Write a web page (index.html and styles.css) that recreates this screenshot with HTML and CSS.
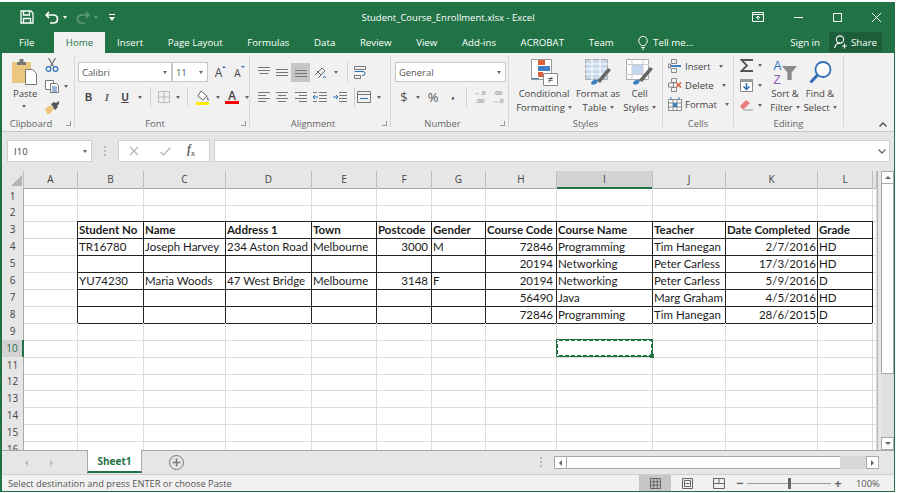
FILE: index.html
```html
<!DOCTYPE html>
<html lang="en">
<head>
<meta charset="utf-8">
<title>Student_Course_Enrollment.xlsx - Excel</title>
<link rel="stylesheet" href="styles.css">
</head>
<body>
<div class="window">
  <header class="titlebar">
    <div class="qat">
      <svg class="q-save" width="14" height="14" viewBox="0 0 14 14" fill="none" stroke="#fff" stroke-width="1.3"><path d="M1 1h10l2 2v10H1z"/><path d="M3.5 1v4h6V1M3.5 13V8.5h7V13"/></svg>
      <svg class="q-undo" width="14" height="13" viewBox="0 0 14 13" fill="none" stroke="#fff" stroke-width="1.7"><path d="M4 1 1.2 4 4 7M1.5 4H8c6 0 6 8 0 8H5"/></svg>
      <i class="caret white q-c1"></i>
      <svg class="q-redo" width="14" height="13" viewBox="0 0 14 13" fill="none" stroke="#5c9a78" stroke-width="1.7"><path d="M10 1l2.8 3L10 7M12.5 4H6c-6 0-6 8 0 8h3"/></svg>
      <i class="caret dim q-c2"></i>
      <svg class="q-more" width="6" height="7" viewBox="0 0 6 7" fill="#fff"><path d="M0 0h6v1H0zM0 3h6L3 7z"/></svg>
    </div>
    <div class="doc-title">Student_Course_Enrollment.xlsx - Excel</div>
    <div class="controls">
      <svg width="12" height="10" viewBox="0 0 12 10" fill="none" stroke="#fff"><path d="M.5.500h11v9H.5zM.5 2.500h11M6 8V4M4 6l2-2 2 2"/></svg>
      <svg width="9" height="9" viewBox="0 0 9 9" stroke="#fff"><path d="M0 4.500h9"/></svg>
      <svg width="9" height="9" viewBox="0 0 9 9" fill="none" stroke="#fff"><path d="M.5.500h8v8h-8z"/></svg>
      <svg width="9" height="9" viewBox="0 0 9 9" stroke="#fff"><path d="M0 0l9 9M9 0L0 9"/></svg>
    </div>
  </header>

  <nav class="tabs">
    <span class="tab tab-file">File</span>
    <span class="tab active">Home</span>
    <span class="tab">Insert</span>
    <span class="tab">Page Layout</span>
    <span class="tab">Formulas</span>
    <span class="tab">Data</span>
    <span class="tab">Review</span>
    <span class="tab">View</span>
    <span class="tab">Add-ins</span>
    <span class="tab">ACROBAT</span>
    <span class="tab">Team</span>
    <span class="tell">
      <svg width="10" height="14" viewBox="0 0 10 14" fill="none" stroke="#fff"><path d="M3 9.500C2.500 8 .7 7 .7 4.700a4.300 4.300 0 0 1 8.600 0C9.300 7 7.500 8 7 9.500zM3.300 11.500h3.400M4 13.200h2"/></svg>
      Tell me...
    </span>
    <span class="signin">Sign in</span>
    <span class="share">
      <svg width="14" height="14" viewBox="0 0 14 14" fill="none" stroke="#fff" stroke-width="1.100"><circle cx="6" cy="4.500" r="3.600"/><path d="M.7 13c.3-3 2.300-4.800 5.300-4.800M10.500 8.500v5M8 11h5"/></svg>
      Share
    </span>
  </nav>

  <section class="ribbon">
    <div class="grp g-clip">
      <div class="body clip-body">
        <div class="paste">
          <svg width="25" height="26" viewBox="0 0 25 26"><rect x="0" y="3" width="19" height="21" fill="#ecc77f"/><path d="M5 3h9v3H5zM7.500 0h4v3h-4z" fill="#7a7a7a"/><path d="M13.500 10.500h7l4 4v11h-11z" fill="#fff" stroke="#777"/></svg>
          <span class="big-label">Paste</span>
          <i class="caret"></i>
        </div>
        <div class="clip-col">
          <svg width="14" height="14" viewBox="0 0 14 14" fill="none"><path d="M3.500 0l5 8.500M10.500 0l-5 8.500" stroke="#6b6b6b" stroke-width="1.200"/><circle cx="3.500" cy="11" r="2.300" stroke="#2f6fb5" stroke-width="1.200"/><circle cx="10.500" cy="11" r="2.300" stroke="#2f6fb5" stroke-width="1.200"/></svg>
          <div class="with-caret">
            <svg width="14" height="13" viewBox="0 0 14 13" fill="#fff" stroke="#777"><path d="M.5.500h8v9h-8z"/><path d="M5.500 3.500h6l2 2v7h-8z"/><path d="M7 7h5M7 9h5M7 11h5" stroke="#2f6fb5"/></svg>
            <i class="caret"></i>
          </div>
          <svg width="14" height="13" viewBox="0 0 14 13"><path d="M0 8l5-4 4 4-4 5H2z" fill="#ecc77f"/><path d="M6 3l3-2 2 1 3-2v3l-2 2 1 1-3 3z" fill="#555"/></svg>
        </div>
      </div>
      <div class="label">Clipboard<i class="launch"></i></div>
    </div>

    <div class="grp g-font">
      <div class="body stack">
        <div class="row">
          <div class="combo c-font">Calibri<i class="caret"></i></div>
          <div class="combo c-size">11<i class="caret"></i></div>
          <span class="tool w19 a-up">A<i class="blue-up"></i></span>
          <span class="tool w19 a-down">A<i class="blue-down"></i></span>
        </div>
        <div class="row r2">
          <span class="tool w19 fb">B</span>
          <span class="tool w18 fi">I</span>
          <span class="tool w18 fu">U</span>
          <span class="tool w12"><i class="caret"></i></span>
          <i class="sep"></i>
          <span class="tool w18 borders"><svg width="12" height="12" viewBox="0 0 12 12" fill="none" stroke="#888" stroke-dasharray="1 1"><path d="M.5.500h11v11H.5zM6 .500v11M.5 6h11"/></svg></span>
          <span class="tool w10"><i class="caret"></i></span>
          <i class="sep"></i>
          <span class="tool w22"><svg width="14" height="15" viewBox="0 0 14 15"><path d="M5 1l6 5-4 4-5-4z" fill="#fff" stroke="#666"/><path d="M11 6l2 4-1 1-1-2z" fill="#777"/><rect y="12" width="13" height="3" fill="#ffee00"/></svg></span>
          <span class="tool w7"><i class="caret"></i></span>
          <span class="tool w22 ca"><span class="ca-l">A</span><i class="red-bar"></i></span>
          <span class="tool w7"><i class="caret"></i></span>
        </div>
      </div>
      <div class="label">Font<i class="launch"></i></div>
    </div>

    <div class="grp g-align">
      <div class="body stack">
        <div class="row pad">
          <span class="tool w18"><svg class="al" viewBox="0 0 12 10"><path d="M0 .5h12M0 3.500h12M1.500 6.500h9"/></svg></span>
          <span class="tool w18"><svg class="al" viewBox="0 0 12 10"><path d="M0 2.500h12M0 5.500h12M0 8.500h12"/></svg></span>
          <span class="tool w19 on"><svg class="al" viewBox="0 0 12 10"><path d="M0 3.500h12M0 6.500h12M0 9.500h12"/></svg></span>
          <span class="tool w20"><svg width="13" height="12" viewBox="0 0 13 12" fill="none" stroke="#666"><path d="M1 9l7-7 3 3-7 7M3 5l4 4"/><path d="M9 11h3" stroke="#2f6fb5"/></svg></span>
          <span class="tool w12"><i class="caret"></i></span>
          <i class="sep s-tall"></i>
          <span class="tool w26"><svg width="14" height="13" viewBox="0 0 14 13" fill="none" stroke="#777"><path d="M.5.500h11v3H.5zM.5 9.500h6v3h-6z"/><path d="M.5 5.500h8.500a2 2 0 0 1 0 4H8" stroke="#2f6fb5"/></svg></span>
        </div>
        <div class="row pad r2">
          <span class="tool w18"><svg class="al" viewBox="0 0 12 10"><path d="M0 .5h12M0 3.500h8M0 6.500h12M0 9.500h8"/></svg></span>
          <span class="tool w18"><svg class="al" viewBox="0 0 12 10"><path d="M0 .5h12M2 3.500h8M0 6.500h12M2 9.500h8"/></svg></span>
          <span class="tool w19"><svg class="al" viewBox="0 0 12 10"><path d="M0 .5h12M4 3.500h8M0 6.500h12M4 9.500h8"/></svg></span>
          <span class="tool w20"><svg width="14" height="10" viewBox="0 0 14 10" fill="none" stroke="#777"><path d="M6 .5h8M6 3.500h8M6 6.500h8M6 9.500h8M0 .5h4M0 9.500h4"/><path d="M5 5H0M2 3 0 5l2 2" stroke="#2f6fb5"/></svg></span>
          <span class="tool w19"><svg width="14" height="10" viewBox="0 0 14 10" fill="none" stroke="#777"><path d="M6 .5h8M6 3.500h8M6 6.500h8M6 9.500h8"/><path d="M0 5h5M3 3l2 2-2 2" stroke="#2f6fb5"/></svg></span>
          <i class="sep s-short"></i>
          <span class="tool w18"><svg width="14" height="12" viewBox="0 0 14 12" fill="none" stroke="#777"><path d="M.5.500h13v11H.5zM.5 3.500h13"/><path d="M3 7.500h8" stroke="#2f6fb5"/></svg></span>
          <span class="tool w12"><i class="caret"></i></span>
        </div>
      </div>
      <div class="label">Alignment<i class="launch"></i></div>
    </div>

    <div class="grp g-num">
      <div class="body stack">
        <div class="row"><div class="combo c-num">General<i class="caret"></i></div></div>
        <div class="row r2 num-row">
          <span class="tool w18 sym">$</span>
          <span class="tool w9"><i class="caret"></i></span>
          <span class="tool w22 sym">%</span>
          <span class="tool w18 sym comma">,</span>
          <i class="sep"></i>
          <span class="tool w18 dec"><em>←.0</em><em>.00</em></span>
          <span class="tool w18 dec"><em>.00</em><em>→.0</em></span>
        </div>
      </div>
      <div class="label">Number<i class="launch"></i></div>
    </div>

    <div class="grp g-styles">
      <div class="body styles-body">
        <div class="big b-cond">
          <svg width="27" height="27" viewBox="0 0 27 27"><path d="M.5.500h20v20H.5z" fill="#fff" stroke="#999"/><path d="M7 1h7v5H7z" fill="#d9603b"/><path d="M7 7h12v5H7z" fill="#3f7fc1"/><path d="M7 13h5v5H7z" fill="#d9603b"/><path d="M1 19h7v1H1z" fill="#3f7fc1"/><path d="M12.500 14.500h14v12h-14z" fill="#fff" stroke="#888"/><text x="19.500" y="24" text-anchor="middle" class="ne">≠</text></svg>
          <span>Conditional</span><span>Formatting<i class="caret"></i></span>
        </div>
        <div class="big b-table">
          <svg width="27" height="27" viewBox="0 0 27 27"><path d="M.5.500h22v20H.5z" fill="#c9d9ec" stroke="#aaa"/><path d="M0 5h23M0 10h23M0 15h23M7 0v21M15 0v21" stroke="#fff"/><path d="M12 22l11-13 3 2-11 13z" fill="#666"/><path d="M6 25c0-3 3-5 7-4l-1 3c-2 2-4 2-6 1z" fill="#3f7fc1"/></svg>
          <span>Format as</span><span>Table<i class="caret"></i></span>
        </div>
        <div class="big b-cell">
          <svg width="27" height="27" viewBox="0 0 27 27"><path d="M.5.500h22v20H.5z" fill="#fff" stroke="#aaa"/><path d="M6 6h11v9H6z" fill="#c3d7ee"/><path d="M0 5.500h23M6 0v21M17 0v21M0 15.500h23" stroke="#ccc"/><path d="M13 21l11-13 3 2-11 13z" fill="#666"/><path d="M7 25c0-3 3-5 7-4l-1 3c-2 2-4 2-6 1z" fill="#3f7fc1"/></svg>
          <span>Cell</span><span>Styles<i class="caret"></i></span>
        </div>
      </div>
      <div class="label">Styles</div>
    </div>

    <div class="grp g-cells">
      <div class="body stack cells-body">
        <div class="cell-btn"><svg width="14" height="14" viewBox="0 0 14 14" fill="none" stroke="#888"><path d="M3.500.5h5v4h-5zM3.500 9.500h5v4h-5zM.5 5h2v4h-2z"/><path d="M3 7h10" stroke="#3f7fc1" stroke-width="2"/></svg><span>Insert</span><i class="caret"></i></div>
        <div class="cell-btn"><svg width="14" height="14" viewBox="0 0 14 14" fill="none" stroke="#888"><path d="M3.500.5h5v4h-5zM3.500 9.500h5v4h-5zM.5 5h5v4h-5z"/><path d="M8 4.500l5 5M13 4.500l-5 5" stroke="#d9603b" stroke-width="1.500"/></svg><span>Delete</span><i class="caret"></i></div>
        <div class="cell-btn"><svg width="14" height="14" viewBox="0 0 14 14" fill="#fff" stroke="#888"><path d="M.5 2.500h13v11H.5zM.5 6h13M.5 10h13M5 2.500v11M9 2.500v11"/><path d="M5 6h4v4H5z" fill="#3f7fc1" stroke="none"/><path d="M3 0v3M11 0v3" stroke="#3f7fc1"/></svg><span>Format</span><i class="caret"></i></div>
      </div>
      <div class="label">Cells</div>
    </div>

    <div class="grp g-edit">
      <div class="body edit-body">
        <div class="edit-col">
          <div class="with-caret"><svg width="13" height="13" viewBox="0 0 13 13" fill="none" stroke="#555" stroke-width="1.800"><path d="M13 1H1.500L7 6.500 1.500 12H13"/></svg><i class="caret"></i></div>
          <div class="with-caret"><svg width="13" height="13" viewBox="0 0 13 13"><path d="M.5.500h12v12H.5z" fill="#fff" stroke="#888"/><path d="M0 0h13v3H0z" fill="#999"/><path d="M6.500 4v6M3.500 7.500l3 3 3-3" fill="none" stroke="#2f6fb5" stroke-width="1.500"/></svg><i class="caret"></i></div>
          <div class="with-caret"><svg width="13" height="12" viewBox="0 0 13 12"><path d="M0 7l6-6 4 3-6 6H2z" fill="#e7817f"/><path d="M3 11h10" stroke="#999"/></svg><i class="caret"></i></div>
        </div>
        <div class="big b-sort">
          <span class="sort-icon"><span class="az"><b class="lt-a">A</b><b class="lt-z">Z</b></span><svg width="15" height="14" viewBox="0 0 14 13"><path d="M0 0h14L9 6v7H5V6z" fill="#8a8a8a"/></svg></span>
          <span>Sort &amp;</span><span>Filter<i class="caret"></i></span>
        </div>
        <div class="big b-find">
          <svg width="23" height="24" viewBox="0 0 23 24" fill="none"><circle cx="14" cy="9" r="7.500" fill="#fff" stroke="#2f6fb5" stroke-width="1.800"/><path d="M8.500 14.500 1.500 22" stroke="#2f6fb5" stroke-width="3"/></svg>
          <span>Find &amp;</span><span>Select<i class="caret"></i></span>
        </div>
      </div>
      <div class="label">Editing</div>
    </div>

    <div class="collapse"><svg width="8" height="5" viewBox="0 0 8 5" fill="none" stroke="#555" stroke-width="1.500"><path d="M.5 4.500 4 1l3.500 3.500"/></svg></div>
  </section>

  <section class="formula">
    <div class="namebox">I10<i class="caret"></i></div>
    <div class="dots"></div>
    <div class="fx-box">
      <svg width="10" height="10" viewBox="0 0 10 10" stroke="#b5b5b5" stroke-width="1.200"><path d="M1 1l8 8M9 1 1 9"/></svg>
      <svg width="11" height="9" viewBox="0 0 11 9" fill="none" stroke="#b5b5b5" stroke-width="1.200"><path d="M.5 5l3 3 7-7.500"/></svg>
      <span class="fx">f<sub>x</sub></span>
    </div>
    <div class="fx-input"><svg width="8" height="5" viewBox="0 0 8 5" fill="none" stroke="#666" stroke-width="1.300"><path d="M.5.500 4 4 7.500.5"/></svg></div>
  </section>

  <section class="sheet">
    <div class="grid">
      <div class="line head"><span class="corner"><svg width="11" height="11" viewBox="0 0 11 11"><path d="M11 0v11H0z" fill="#b4b4b4"/></svg></span><span>A</span><span>B</span><span>C</span><span>D</span><span>E</span><span>F</span><span>G</span><span>H</span><span class="sel">I</span><span>J</span><span>K</span><span>L</span><span></span></div>
      <div class="line"><b>1</b><s></s><s></s><s></s><s></s><s></s><s></s><s></s><s></s><s></s><s></s><s></s><s></s><s></s></div>
      <div class="line"><b>2</b><s></s><s class="kb"></s><s class="kb"></s><s class="kb"></s><s class="kb"></s><s class="kb"></s><s class="kb"></s><s class="kb"></s><s class="kb"></s><s class="kb"></s><s class="kb"></s><s class="kb"></s><s></s></div>
      <div class="line th"><b>3</b><s class="kr"></s><s class="k">Student No</s><s class="k">Name</s><s class="k">Address 1</s><s class="k">Town</s><s class="k">Postcode</s><s class="k">Gender</s><s class="k">Course Code</s><s class="k">Course Name</s><s class="k">Teacher</s><s class="k">Date Completed</s><s class="k">Grade</s><s></s></div>
      <div class="line"><b>4</b><s class="kr"></s><s class="k">TR16780</s><s class="k">Joseph Harvey</s><s class="k">234 Aston Road</s><s class="k">Melbourne</s><s class="k n">3000</s><s class="k">M</s><s class="k n">72846</s><s class="k">Programming</s><s class="k">Tim Hanegan</s><s class="k n d">2/7/2016</s><s class="k">HD</s><s></s></div>
      <div class="line"><b>5</b><s class="kr"></s><s class="k"></s><s class="k"></s><s class="k"></s><s class="k"></s><s class="k"></s><s class="k"></s><s class="k n">20194</s><s class="k">Networking</s><s class="k">Peter Carless</s><s class="k n d">17/3/2016</s><s class="k">HD</s><s></s></div>
      <div class="line"><b>6</b><s class="kr"></s><s class="k">YU74230</s><s class="k">Maria Woods</s><s class="k">47 West Bridge</s><s class="k">Melbourne</s><s class="k n">3148</s><s class="k">F</s><s class="k n">20194</s><s class="k">Networking</s><s class="k">Peter Carless</s><s class="k n d">5/9/2016</s><s class="k">D</s><s></s></div>
      <div class="line"><b>7</b><s class="kr"></s><s class="k"></s><s class="k"></s><s class="k"></s><s class="k"></s><s class="k"></s><s class="k"></s><s class="k n">56490</s><s class="k">Java</s><s class="k">Marg Graham</s><s class="k n d">4/5/2016</s><s class="k">HD</s><s></s></div>
      <div class="line"><b>8</b><s class="kr"></s><s class="k"></s><s class="k"></s><s class="k"></s><s class="k"></s><s class="k"></s><s class="k"></s><s class="k n">72846</s><s class="k">Programming</s><s class="k">Tim Hanegan</s><s class="k n d">28/6/2015</s><s class="k">D</s><s></s></div>
      <div class="line"><b>9</b><s></s><s></s><s></s><s></s><s></s><s></s><s></s><s></s><s></s><s></s><s></s><s></s><s></s></div>
      <div class="line"><b class="sel">10</b><s></s><s></s><s></s><s></s><s></s><s></s><s></s><s></s><s></s><s></s><s></s><s></s><s></s></div>
      <div class="line"><b>11</b><s></s><s></s><s></s><s></s><s></s><s></s><s></s><s></s><s></s><s></s><s></s><s></s><s></s></div>
      <div class="line"><b>12</b><s></s><s></s><s></s><s></s><s></s><s></s><s></s><s></s><s></s><s></s><s></s><s></s><s></s></div>
      <div class="line"><b>13</b><s></s><s></s><s></s><s></s><s></s><s></s><s></s><s></s><s></s><s></s><s></s><s></s><s></s></div>
      <div class="line"><b>14</b><s></s><s></s><s></s><s></s><s></s><s></s><s></s><s></s><s></s><s></s><s></s><s></s><s></s></div>
      <div class="line"><b>15</b><s></s><s></s><s></s><s></s><s></s><s></s><s></s><s></s><s></s><s></s><s></s><s></s><s></s></div>
      <div class="line"><b>16</b><s></s><s></s><s></s><s></s><s></s><s></s><s></s><s></s><s></s><s></s><s></s><s></s><s></s></div>
      <div class="ants"><i></i></div>
    </div>
    <div class="vscroll">
      <span class="sb-btn"><i class="tri up"></i></span>
      <span class="v-thumb"></span>
      <span class="v-rest"></span>
      <span class="sb-btn"><i class="tri down"></i></span>
    </div>
  </section>

  <section class="sheetbar">
    <div class="nav-arrows"><i class="tri left"></i><i class="tri right"></i></div>
    <div class="sheet-tab">Sheet1</div>
    <svg class="add" width="15" height="15" viewBox="0 0 15 15" fill="none" stroke="#777"><circle cx="7.500" cy="7.500" r="7"/><path d="M7.500 3.500v8M3.500 7.500h8" stroke-width="1.500"/></svg>
    <div class="hdots"></div>
    <div class="hscroll">
      <span class="sb-btn"><i class="tri left dark"></i></span>
      <span class="h-thumb"></span>
      <span class="h-rest"></span>
      <span class="sb-btn"><i class="tri right dark"></i></span>
    </div>
  </section>

  <footer class="status">
    <span class="msg">Select destination and press ENTER or choose Paste</span>
    <div class="views">
      <span class="view on"><svg width="11" height="11" viewBox="0 0 11 11" fill="none" stroke="#666"><path d="M.5.500h10v10H.5zM.5 3.800h10M.5 7.200h10M3.800.5v10M7.200.5v10"/></svg></span>
      <span class="view"><svg width="11" height="11" viewBox="0 0 11 11" fill="none" stroke="#666"><path d="M.5.500h10v10H.5zM2.500 2.500h6v6h-6zM3.500 5.500h4"/></svg></span>
      <span class="view"><svg width="12" height="11" viewBox="0 0 12 11" fill="none" stroke="#666"><path d="M.5.500h11v10H.5zM6 .5v5H.5M6 5.500h5.500"/></svg></span>
    </div>
    <div class="zoom">
      <span class="z-sym">−</span>
      <span class="z-track"><i></i></span>
      <span class="z-sym">+</span>
      <span class="z-val">100%</span>
    </div>
  </footer>
</div>
</body>
</html>
```
FILE: styles.css
```css
* { box-sizing: border-box; }
html, body { margin: 0; padding: 0; background: #fff; }
body { font-family: "Open Sans", "Noto Sans", sans-serif; color: #444; overflow: hidden; }
svg { display: block; flex: none; }
.window { width: 895px; height: 490px; margin-top: 2px; border-left: 2px solid #217346; border-right: 1px solid #217346; border-bottom: 1px solid #217346; background: #e6e6e6; overflow: hidden; }

/* title bar */
.titlebar { height: 30px; background: #217346; display: grid; grid-template-columns: 1fr auto 1fr; align-items: center; color: #fff; }
.qat { display: flex; align-items: center; padding-left: 18px; }
.q-undo { margin-left: 11px; }
.q-c1 { margin-left: 4px; }
.q-redo { margin-left: 9px; }
.q-c2 { margin-left: 4px; }
.q-more { margin-left: 11px; }
.doc-title { font-size: 9.500px; }
.controls { display: flex; align-items: center; justify-content: flex-end; gap: 30px; padding-right: 13px; }
.caret { display: inline-block; width: 0; height: 0; border-top: 3px solid #666; border-left: 2.500px solid transparent; border-right: 2.500px solid transparent; flex: none; }
.caret.white { border-top-color: #fff; }
.caret.dim { border-top-color: #5c9a78; }

/* tabs */
.tabs { height: 21px; background: #217346; display: flex; align-items: stretch; color: #fff; font-size: 9.700px; }
.tab { display: flex; align-items: center; padding: 0 12.300px; white-space: nowrap; }
.tab-file { padding: 0 20px 0 17px; }
.tab.active { background: #f1f1f1; color: #217346; padding: 0 11.500px; }
.tell { display: flex; align-items: center; gap: 5px; margin-left: 12px; }
.signin { display: flex; align-items: center; margin-left: auto; }
.share { display: flex; align-items: center; gap: 3px; width: 53px; height: 20px; margin: 0 12px 0 9px; padding-left: 5px; background: #1b5e39; }

/* ribbon */
.ribbon { height: 79px; background: #f1f1f1; border-bottom: 1px solid #c6c6c6; display: flex; position: relative; font-size: 9.500px; }
.grp { display: flex; flex-direction: column; border-right: 1px solid #d8d8d8; margin: 3px 0 4px; }
.body { flex: 1; min-height: 0; }
.label { height: 12px; position: relative; text-align: center; line-height: 18px; color: #666; font-size: 9.400px; }
.label:has(.launch) { padding-right: 14px; }
.launch { position: absolute; right: 3px; top: 6px; width: 5px; height: 5px; border-left: 1px solid #999; border-bottom: 1px solid #999; transform: scaleX(-1); }
.g-clip { width: 73px; }
.g-font { width: 175px; }
.g-align { width: 141px; }
.g-num { width: 118px; }
.g-styles { width: 154px; }
.g-cells { width: 71px; }
.g-edit { width: 110px; }
.stack { display: flex; flex-direction: column; }
.row { display: flex; align-items: center; height: 20px; margin-top: 6px; padding-left: 3px; }
.row.pad { padding-left: 5px; }
.row.r2 { margin-top: 5px; height: 20px; }
.tool { display: flex; align-items: center; justify-content: center; height: 19px; flex: none; color: #444; position: relative; }
.tool.on { background: #c6c6c6; }
.w7 { width: 7px; } .w9 { width: 9px; } .w10 { width: 10px; } .w12 { width: 12px; }
.w18 { width: 18px; } .w19 { width: 19px; } .w20 { width: 20px; } .w22 { width: 22px; } .w26 { width: 26px; }
.sep { width: 1px; height: 20px; background: #d0d0d0; margin: 0 4px; flex: none; }
.s-tall, .s-short { margin-left: 5px; margin-right: 0; }
.combo { height: 20px; background: #fff; border: 1px solid #c6c6c6; display: flex; align-items: center; justify-content: space-between; padding: 0 4px 0 3px; font-size: 9.400px; color: #555; flex: none; }
.c-font { width: 94px; }
.c-size { width: 36px; }
.c-num { width: 111px; margin-left: 1px; }
.a-up { font-size: 12px; margin-left: 1px; }
.a-down { font-size: 10px; margin-top: 1px; }
.blue-up, .blue-down { position: absolute; right: 2px; top: 3px; border-left: 2px solid transparent; border-right: 2px solid transparent; }
.blue-up { border-bottom: 2px solid #2f6fb5; }
.blue-down { border-top: 2px solid #2f6fb5; }
.fb { font-weight: 700; font-family: "Liberation Sans", sans-serif; font-size: 10px; margin-left: 1px; }
.fi { font-style: italic; font-family: "Liberation Serif", serif; font-size: 11px; font-weight: 700; color: #666; }
.fu { text-decoration: underline; font-weight: 700; font-family: "Liberation Sans", sans-serif; font-size: 10px; }
.ca { flex-direction: column; }
.ca-l { font-size: 12px; line-height: 11px; font-weight: 600; }
.red-bar { width: 14px; height: 3px; background: #f00; }
.al { width: 12px; height: 10px; fill: none; stroke: #777; }
.num-row { padding-left: 4px; }
.sym { font-size: 13px; color: #555; }
.comma { font-weight: 700; line-height: 12px; align-items: flex-start; margin-top: -2px; }
.dec { flex-direction: column; font-size: 6px; line-height: 8px; color: #555; }
.dec em { font-style: normal; white-space: nowrap; }
.clip-body { display: flex; }
.paste { width: 43px; padding: 3px 0 0 10px; display: flex; flex-direction: column; align-items: flex-start; }
.big-label { margin: 2px 0 3px 1px; line-height: 13px; }
.paste .caret { margin-left: 10px; margin-top: 2px; }
.clip-col { display: flex; flex-direction: column; padding-top: 2px; gap: 8px; }
.with-caret { display: flex; align-items: center; gap: 5px; }
.styles-body { display: flex; }
.big { display: flex; flex-direction: column; align-items: center; padding-top: 3px; line-height: 14px; color: #444; white-space: nowrap; }
.big > * { flex: none; }
.big > svg, .sort-icon { height: 27px; margin-bottom: 1px; }
.big .caret { margin-left: 3px; vertical-align: 2px; }
.b-cond { width: 70px; }
.b-table { width: 38px; }
.b-cell { width: 45px; }
.ne { font-size: 10px; fill: #333; font-family: "Liberation Sans", sans-serif; }
.cells-body { padding: 3px 0 0 5px; gap: 5px; }
.cell-btn { display: flex; align-items: center; gap: 3px; height: 14px; }
.cell-btn .caret { margin-left: 5px; }
.edit-body { display: flex; }
.edit-col { display: flex; flex-direction: column; padding: 3px 0 0 6px; gap: 7px; width: 31px; }
.b-sort { width: 40px; }
.b-find { width: 30px; }
.sort-icon { display: flex; align-items: center; }
.az { display: flex; flex-direction: column; font-size: 12px; line-height: 14px; font-family: "Liberation Sans", sans-serif; }
.az b { font-weight: 400; }
.lt-a { color: #2f6fb5; }
.lt-z { color: #8e58b6; }
.collapse { position: absolute; right: 7px; bottom: 4px; }

/* formula bar */
.formula { height: 39px; display: flex; padding: 8px 4px 9px 5px; align-items: stretch; }
.namebox { width: 85px; background: #fff; border: 1px solid #d0d0d0; display: flex; align-items: center; justify-content: space-between; padding: 0 4px 0 6px; font-size: 9.600px; }
.dots { width: 2px; height: 10px; margin: 6px 12px 0 12px; border-left: 2px dotted #b8b8b8; }
.fx-box { width: 92px; background: #fff; border: 1px solid #d0d0d0; display: flex; align-items: center; padding-left: 10px; gap: 21px; }
.fx { font-family: "Liberation Serif", serif; font-style: italic; font-size: 12px; font-weight: 700; color: #666; line-height: 1; margin-left: -5px; }
.fx sub { font-size: 8px; }
.fx-input { flex: 1; margin-left: 4px; background: #fff; border: 1px solid #d0d0d0; display: flex; align-items: center; justify-content: flex-end; padding-right: 3px; }

/* sheet */
.sheet { height: 279px; display: flex; overflow: hidden; }
.grid { width: 876px; position: relative; background: #fff; overflow: hidden; border-right: 1px solid #b5b5b5; flex: none; }
.line { display: grid; grid-template-columns: 22px 54px 66px 82px 86px 65px 55px 54px 71px 96px 73px 92px 55px 4px; height: 16.900px; font-family: Lato, sans-serif; font-size: 11.500px; color: #1c1c1c; }
.line > s { text-decoration: none; border-right: 1px solid #dcdcdc; border-bottom: 1px solid #dcdcdc; padding: 0 1px; line-height: 17px; white-space: nowrap; overflow: visible; }
.line > b { background: #e6e6e6; border-right: 1px solid #a8a8a8; border-bottom: 1px solid #c6c6c6; font-weight: 400; text-align: center; color: #444; font-family: "Open Sans", sans-serif; font-size: 10px; line-height: 17px; }
.line > b.sel { background: #d2d2d2; color: #217346; border-right: 2px solid #217346; }
.line > s.k { border-right-color: #222; border-bottom-color: #222; }
.line > s.kb { border-bottom-color: #222; }
.line > s.kr { border-right-color: #222; }
.line > s.n { text-align: right; padding-right: 3px; }
.line > s.d { padding-right: 1px; }
.th > s { font-weight: 700; }
.head { height: 16.600px; font-family: "Open Sans", sans-serif; font-size: 10px; color: #444; }
.head > span { background: #e6e6e6; border-right: 1px solid #bdbdbd; border-bottom: 1px solid #a8a8a8; text-align: center; line-height: 16px; }
.head > span.sel { background: #d2d2d2; border-bottom: 2px solid #217346; }
.corner { display: flex; justify-content: flex-end; align-items: flex-end; padding: 0 1px 2px 0; }
.ants { position: absolute; left: 554px; top: 168px; width: 97px; height: 18px; border: 2px solid #217346; }
.ants::after { content: ""; position: absolute; inset: -1px;
  background:
    repeating-linear-gradient(90deg, #fff 0 2px, transparent 2px 6px) top / 100% 1px no-repeat,
    repeating-linear-gradient(90deg, #fff 0 2px, transparent 2px 6px) bottom / 100% 1px no-repeat,
    repeating-linear-gradient(0deg, #fff 0 2px, transparent 2px 6px) left / 1px 100% no-repeat,
    repeating-linear-gradient(0deg, #fff 0 2px, transparent 2px 6px) right / 1px 100% no-repeat; }
.ants i { position: absolute; right: -3px; bottom: -3px; width: 4px; height: 4px; background: #217346; z-index: 1; }
.vscroll { width: 13px; margin-left: 3px; display: flex; flex-direction: column; flex: none; }
.sb-btn { width: 13px; height: 13px; flex: none; background: #fff; border: 1px solid #a8a8a8; display: flex; align-items: center; justify-content: center; }
.v-thumb { height: 190px; background: #fff; border: 1px solid #a8a8a8; border-top: 0; }
.v-rest { flex: 1; background: #e0e0e0; }
.tri { display: block; width: 0; height: 0; border: 3px solid transparent; }
.tri.up { border-bottom: 3px solid #666; border-top-width: 0; }
.tri.down { border-top: 3px solid #666; border-bottom-width: 0; }
.tri.left { border-right: 3px solid #bbb; border-left-width: 0; }
.tri.right { border-left: 3px solid #bbb; border-right-width: 0; }
.tri.left.dark { border-right-color: #666; }
.tri.right.dark { border-left-color: #666; }

/* sheet tabs */
.sheetbar { height: 24px; display: flex; align-items: flex-start; border-top: 1px solid #a8a8a8; }
.nav-arrows { width: 85px; height: 23px; display: flex; align-items: center; gap: 22px; padding-left: 23px; }
.sheet-tab { width: 55px; height: 23px; background: #fff; border-left: 1px solid #a8a8a8; border-right: 1px solid #a8a8a8; border-bottom: 2px solid #217346; margin-top: -1px; color: #217346; font-weight: 700; font-size: 10px; text-align: center; line-height: 22px; }
.add { margin: 4px 0 0 27px; }
.hdots { width: 2px; height: 10px; margin: 6px 0 0 356px; border-left: 2px dotted #b8b8b8; }
.hscroll { display: flex; margin: 5px 0 0 12px; width: 325px; height: 13px; }
.hscroll .sb-btn { width: 13px; }
.h-thumb { width: 273px; background: #fff; border-top: 1px solid #a8a8a8; border-bottom: 1px solid #a8a8a8; }
.h-rest { flex: 1; background: #d8d8d8; }

/* status */
.status { height: 17px; background: #f1f1f1; border-top: 1px solid #d0d0d0; display: flex; align-items: center; font-size: 9.300px; color: #555; }
.msg { padding-left: 6px; width: 637px; flex: none; white-space: nowrap; }
.views { display: flex; height: 100%; }
.view { width: 32px; display: flex; align-items: center; justify-content: center; }
.view.on { background: #c6c6c6; }
.zoom { display: flex; align-items: center; }
.z-sym { width: 10px; text-align: center; font-size: 13px; line-height: 12px; font-weight: 700; color: #666; }
.z-track { width: 84px; height: 1px; background: #999; position: relative; margin: 0 2px; }
.z-track i { position: absolute; left: 41px; top: -5px; width: 3px; height: 11px; background: #666; }
.z-val { margin-left: 13px; font-size: 9.400px; }
```
